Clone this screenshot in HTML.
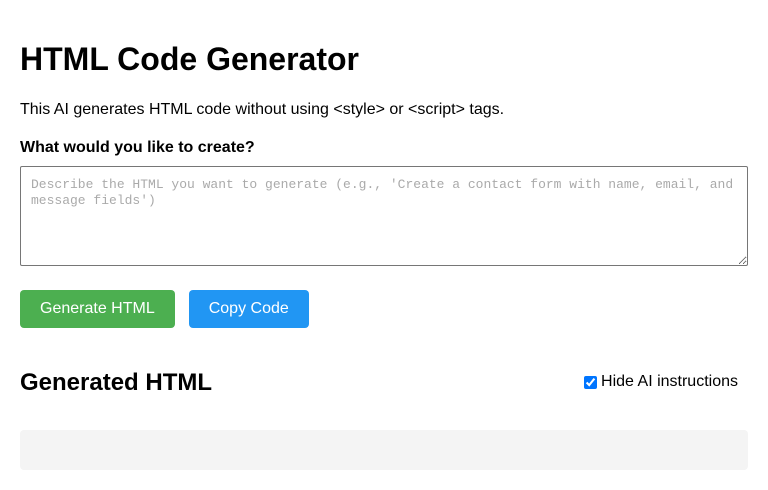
<!DOCTYPE html>
<html><head><style>
body{margin:0;padding:20px;font-family:"Liberation Sans",sans-serif;color:#000;background:#fff;width:728px;}
h1{font-size:32px;margin:21px 0 0;line-height:37px;}
p{font-size:16px;margin:23px 0 0;line-height:18px;}
label.l{display:block;font-weight:bold;font-size:16px;margin-top:20px;line-height:18px;}
textarea{display:block;box-sizing:border-box;width:728px;height:100px;margin-top:9px;padding:10px 10px 10px;font-family:"Liberation Mono",monospace;font-size:13px;line-height:16px;border:1px solid #767676;border-radius:2px;resize:vertical;}
textarea::placeholder{color:#aaa;}
.btns{margin-top:24px;height:38px;}
button{height:38px;padding:0 20px;font-size:16px;font-family:"Liberation Sans",sans-serif;color:#fff;border:none;border-radius:4px;float:left;margin-right:14px;}
.row{margin-top:41px;height:28px;position:relative;}
h2{font-size:24px;margin:0;line-height:28px;}
.chk{position:absolute;right:10px;top:4px;font-size:16px;display:flex;align-items:center;}
.chk input{margin:0 4px 0 0;width:13px;height:13px;}
.out{margin-top:33px;height:40px;background:#f4f4f4;border-radius:4px;}
</style></head><body>
<h1>HTML Code Generator</h1>
<p>This AI generates HTML code without using &lt;style&gt; or &lt;script&gt; tags.</p>
<label class="l">What would you like to create?</label>
<textarea placeholder="Describe the HTML you want to generate (e.g., 'Create a contact form with name, email, and message fields')"></textarea>
<div class="btns"><button style="background:#4CAF50">Generate HTML</button><button style="background:#2196F3">Copy Code</button></div>
<div class="row"><h2>Generated HTML</h2><label class="chk"><input type="checkbox" checked>Hide AI instructions</label></div>
<div class="out"></div>
</body></html>
